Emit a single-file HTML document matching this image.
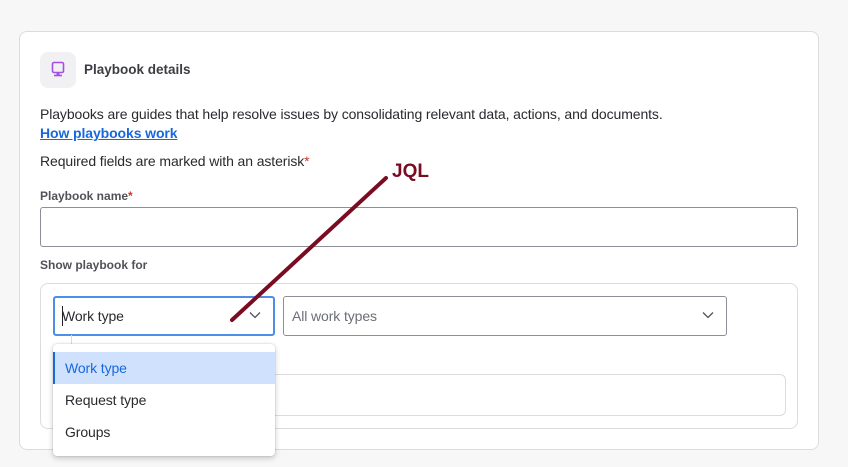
<!DOCTYPE html>
<html><head><style>
body{margin:0;width:848px;height:467px;background:#f7f7f7;font-family:"Liberation Sans",sans-serif;position:relative;overflow:hidden;color:#292a2e}
.a{position:absolute}
.card{left:19px;top:31px;width:798px;height:417px;background:#fff;border:1px solid #dcdcdc;border-radius:8px}
.t{font-size:14px;letter-spacing:-0.1px}
</style></head><body>
<div class="a card"></div>
<div class="a" style="left:40px;top:52px;width:36px;height:36px;background:#f1f1f3;border-radius:8px"></div>
<svg class="a" style="left:50px;top:61px" width="16" height="17" viewBox="0 0 16 17"><rect x="2.5" y="1.5" width="11" height="10" rx="1.5" fill="none" stroke="#a54ee6" stroke-width="1.6"/><path d="M4 14.5h8" stroke="#a54ee6" stroke-width="1.6"/><rect x="6.5" y="12" width="3" height="3" fill="#a54ee6"/></svg>
<div class="a" style="left:84px;top:62px;font-size:13.5px;font-weight:bold;color:#3b3d42">Playbook details</div>
<div class="a t" style="left:40px;top:106px">Playbooks are guides that help resolve issues by consolidating relevant data, actions, and documents.</div>
<div class="a t" style="left:40px;top:125px;color:#1868db;font-weight:bold;text-decoration:underline">How playbooks work</div>
<div class="a t" style="left:40px;top:153px">Required fields are marked with an asterisk<span style="color:#c9372c">*</span></div>
<div class="a" style="left:40px;top:189px;font-size:12px;font-weight:bold;color:#505258">Playbook name<span style="color:#c9372c">*</span></div>
<div class="a" style="left:40px;top:207px;width:756px;height:38px;border:1px solid #8c8f97;border-radius:3px"></div>
<div class="a" style="left:40px;top:258px;font-size:12px;font-weight:bold;color:#505258">Show playbook for</div>
<div class="a" style="left:40px;top:283px;width:756px;height:144px;border:1px solid #dcdcdc;border-radius:8px"></div>
<div class="a" style="left:53px;top:296px;width:218px;height:36px;border:2px solid #4c8ee8;border-radius:3px"></div>
<div class="a t" style="left:62px;top:308px;color:#292a2e">Work type</div>
<div class="a" style="left:62px;top:306px;width:1px;height:20px;background:#222"></div>
<svg class="a" style="left:249px;top:311px" width="12" height="8"><path d="M1 1.5l5 5 5-5" fill="none" stroke="#505258" stroke-width="1.3"/></svg>
<div class="a" style="left:283px;top:296px;width:442px;height:38px;border:1px solid #8c8f97;border-radius:3px"></div>
<div class="a t" style="left:292px;top:308px;color:#6b6e76">All work types</div>
<svg class="a" style="left:702px;top:311px" width="12" height="8"><path d="M1 1.5l5 5 5-5" fill="none" stroke="#505258" stroke-width="1.3"/></svg>
<div class="a" style="left:71px;top:335px;width:1px;height:40px;background:#dcdcdc"></div>
<div class="a" style="left:71px;top:374px;width:713px;height:40px;border:1px solid #dcdcdc;border-radius:6px"></div>
<div class="a" style="left:53px;top:344px;width:222px;height:112px;background:#fff;border-radius:4px;box-shadow:0 2px 6px rgba(0,0,0,.22),0 0 1px rgba(0,0,0,.3)"></div>
<div class="a" style="left:53px;top:352px;width:222px;height:32px;background:#cfe1fd"></div>
<div class="a" style="left:53px;top:352px;width:2px;height:32px;background:#1868db"></div>
<div class="a t" style="left:65px;top:360px;color:#1868db">Work type</div>
<div class="a t" style="left:65px;top:392px">Request type</div>
<div class="a t" style="left:65px;top:424px">Groups</div>
<svg class="a" style="left:0;top:0" width="848" height="467"><path d="M232 320L386 178" fill="none" stroke="#7a0c22" stroke-width="4" stroke-linecap="round"/></svg>
<div class="a" style="left:392px;top:161px;font-size:19px;font-weight:bold;color:#7a0c22">JQL</div>
</body></html>
